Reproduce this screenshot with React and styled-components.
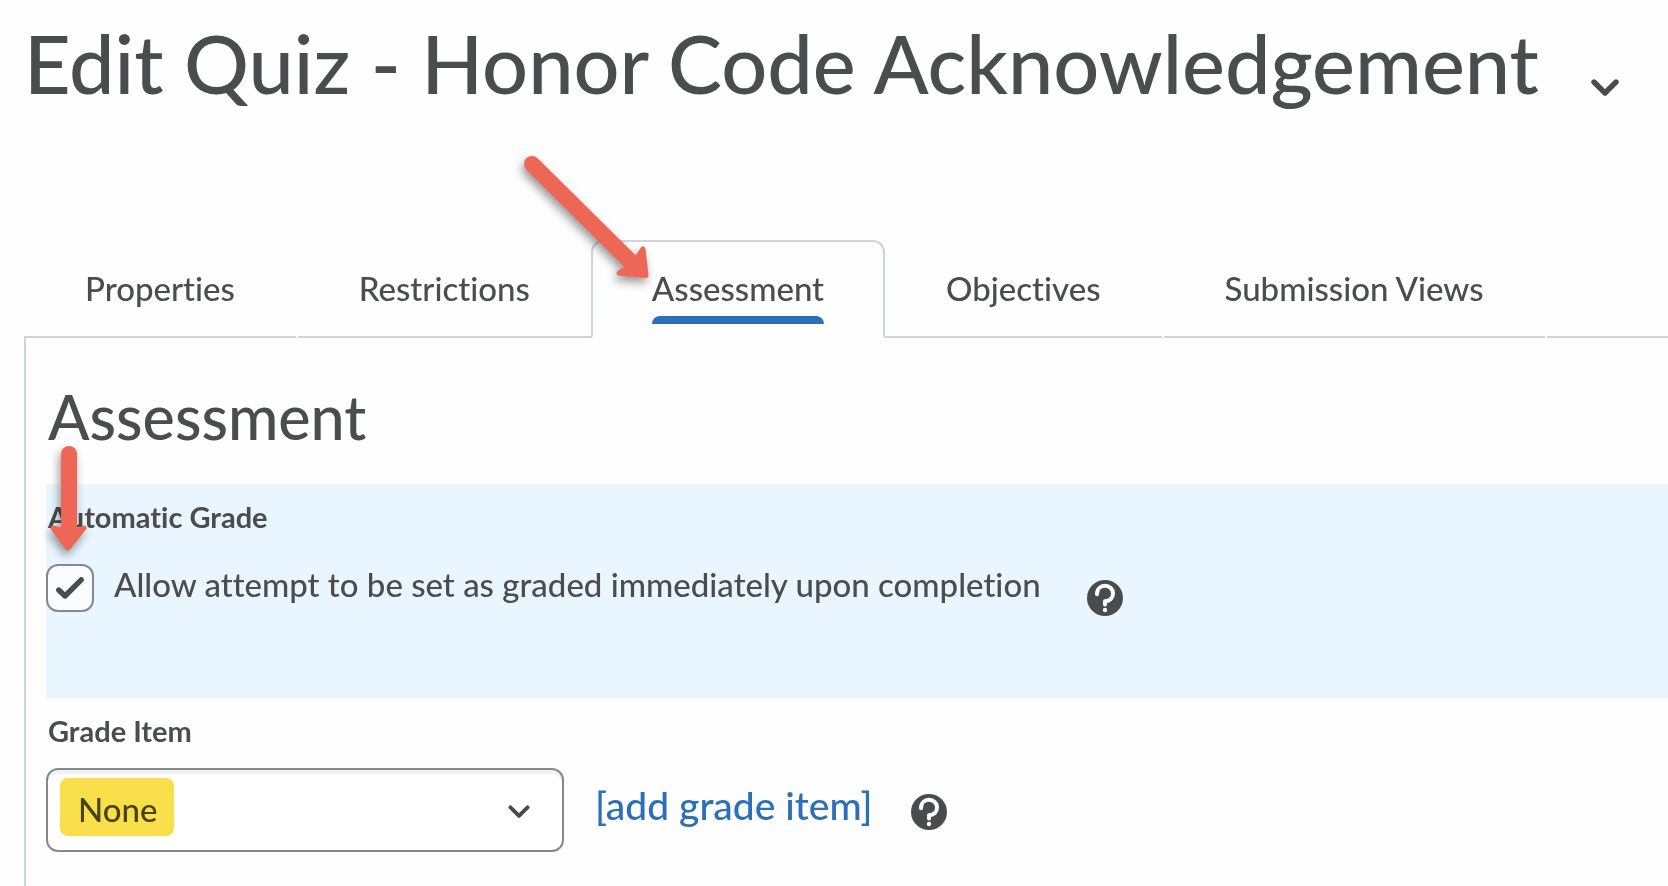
import { useState } from 'react';
import styled, { createGlobalStyle, css } from 'styled-components';

const GlobalStyle = createGlobalStyle`
  *, *::before, *::after {
    box-sizing: border-box;
  }

  body {
    margin: 0;
    background: #fefefe;
    color: #4a4c4e;
    font-family: Lato, 'Open Sans', sans-serif;
    font-size: 33px;
    font-weight: 500;
    font-variant-ligatures: none;
    line-height: 40px;
  }

  button, select, input {
    font: inherit;
    font-variant-ligatures: none;
    color: inherit;
  }
`;

const Page = styled.div`
  min-height: 100vh;
  display: flex;
  flex-direction: column;
  padding-left: 24px;
  overflow: hidden;
`;

const PageHeader = styled.header`
  display: flex;
  align-items: center;
  gap: 44px;
  height: 126px;
`;

const PageTitle = styled.h1`
  margin: 0;
  font-size: 81px;
  line-height: 96px;
  font-weight: 500;
  white-space: nowrap;
`;

const IconButton = styled.button`
  display: flex;
  flex: none;
  padding: 0;
  border: 0;
  background: none;
  cursor: pointer;
`;

const TitleMenuButton = styled(IconButton)`
  padding: 8px;
  margin-top: 50px;
`;

const TabList = styled.div`
  display: flex;
  align-items: flex-end;
  gap: 2px;
  margin-top: 114px;

  &::after {
    content: '';
    flex: 1;
    border-bottom: 2px solid #cdd5dc;
  }
`;

const Tab = styled.button`
  position: relative;
  height: 98px;
  padding: 22px 61px 0;
  border: 0;
  border-bottom: 2px solid #cdd5dc;
  background: none;
  white-space: nowrap;
  cursor: pointer;

  ${(props) =>
    props.$active &&
    css`
      margin: 0 -2px;
      padding: 20px 59px 0;
      border: 2px solid #cdd5dc;
      border-bottom-color: transparent;
      border-radius: 12px 12px 0 0;
    `}
`;

const TabLabel = styled.span`
  display: block;
  height: 62px;

  &::after {
    content: '';
    display: block;
    height: 8px;
    margin-top: 8px;
    border-radius: 8px 8px 0 0;
    background: ${(props) => (props.$active ? '#2b6fb9' : 'transparent')};
  }
`;

const Panel = styled.main`
  flex: 1;
  padding: 40px 0 32px 20px;
  border-left: 2px solid #cdd5dc;
`;

const SectionTitle = styled.h2`
  margin: 0;
  padding-left: 2px;
  font-size: 61px;
  line-height: 78px;
  font-weight: 500;
`;

const Field = styled.section`
  position: relative;
  padding-top: 16px;
`;

const HighlightedField = styled(Field)`
  height: 214px;
  margin-top: 28px;
  background: #e9f6ff;
`;

const FieldLabel = styled.label`
  display: block;
  padding-left: 2px;
  font-size: 29px;
  line-height: 34px;
  font-weight: 700;
`;

const FieldTitle = styled.h3`
  margin: 0;
  padding-left: 2px;
  font-size: 29px;
  line-height: 34px;
`;

const Row = styled.div`
  display: flex;
  align-items: center;
  margin-top: ${(props) => props.$mt};
`;

const CheckboxLabel = styled.label`
  display: flex;
  align-items: center;
  gap: 20px;
  cursor: pointer;
`;

const CheckboxText = styled.span`
  padding-bottom: 8px;
`;

const CheckboxBox = styled.span`
  display: grid;
  flex: none;
  width: 48px;
  height: 48px;

  & > * {
    grid-area: 1 / 1;
  }

  svg {
    place-self: center;
    pointer-events: none;
  }
`;

const Checkbox = styled.input`
  appearance: none;
  width: 48px;
  height: 48px;
  margin: 0;
  border: 2px solid #86898c;
  border-radius: 12px;
  background: #f9fbff;
  cursor: pointer;
`;

const HelpButton = styled(IconButton)`
  margin-top: ${(props) => props.$mt};
  margin-left: ${(props) => props.$ml};
`;

const SelectWrapper = styled.div`
  position: relative;
  display: grid;
  width: 518px;

  & > select,
  & > svg {
    grid-area: 1 / 1;
  }

  & > svg {
    place-self: center end;
    margin-top: 4px;
    margin-right: 34px;
    pointer-events: none;
  }
`;

const Select = styled.select`
  appearance: none;
  width: 100%;
  height: 84px;
  padding: 0 80px 2px 30px;
  border: 2px solid #86898c;
  border-radius: 12px;
  background: #ffffff;
  box-shadow: inset 0 4px 0 #f1f2f4;
  cursor: pointer;
`;

const Marker = styled.span`
  position: absolute;
  top: 10px;
  left: 14px;
  width: 114px;
  height: 58px;
  border-radius: 8px;
  background: #f9df4a;
  mix-blend-mode: multiply;
  pointer-events: none;
`;

const AddLink = styled.a`
  margin-left: 31px;
  padding-bottom: 10px;
  color: #2b6fb9;
  font-size: 39px;
  line-height: 48px;
  text-decoration: none;
`;

const Arrow = styled.svg`
  position: absolute;
  top: ${(props) => props.$top};
  left: ${(props) => props.$left};
  overflow: visible;
  pointer-events: none;
  z-index: 1;
  fill: #ee6655;
  stroke: #ee6655;
  stroke-linecap: round;
  stroke-linejoin: round;
  filter: drop-shadow(-2px 5px 5px rgba(0, 0, 0, 0.4));
`;

const tabs = ['Properties', 'Restrictions', 'Assessment', 'Objectives', 'Submission Views'];

function ChevronIcon({ width, height, stroke }) {
  return (
    <svg width={width} height={height} viewBox="0 0 28 18" fill="none" aria-hidden="true">
      <path
        d="M3 3 L14 14 L25 3"
        stroke="#494c4e"
        strokeWidth={stroke}
        strokeLinecap="round"
        strokeLinejoin="round"
      />
    </svg>
  );
}

function HelpIcon() {
  return (
    <svg width="36" height="36" viewBox="0 0 36 36" fill="none" aria-hidden="true">
      <circle cx="18" cy="18" r="18" fill="#494c4e" />
      <path
        d="M10 14.2 C10 9 13.5 5.8 18 5.8 C22.6 5.8 26 9.2 26 13.6 C26 18 22.8 20.9 18 21.3 V24.6"
        stroke="#fff"
        strokeWidth="4"
        strokeLinecap="round"
        strokeLinejoin="round"
      />
      <circle cx="18" cy="30" r="2.2" fill="#fff" />
    </svg>
  );
}

function CheckIcon() {
  return (
    <svg width="28" height="22" viewBox="0 0 28 22" fill="none" aria-hidden="true">
      <path
        d="M2.8 13 L9 19 L25.2 2.8"
        stroke="#494c4e"
        strokeWidth="5.4"
        strokeLinecap="round"
        strokeLinejoin="round"
      />
    </svg>
  );
}

export default function App() {
  const [activeTab, setActiveTab] = useState('Assessment');
  const [autoGrade, setAutoGrade] = useState(true);
  const [gradeItem, setGradeItem] = useState('none');

  return (
    <>
      <GlobalStyle />
      <Page>
        <PageHeader>
          <PageTitle>Edit Quiz - Honor Code Acknowledgement</PageTitle>
          <TitleMenuButton type="button" aria-label="Quiz actions">
            <ChevronIcon width="28" height="18" stroke="5.4" />
          </TitleMenuButton>
        </PageHeader>

        <TabList role="tablist">
          {tabs.map((tab) => (
            <Tab
              key={tab}
              type="button"
              role="tab"
              aria-selected={tab === activeTab}
              $active={tab === activeTab}
              onClick={() => setActiveTab(tab)}
            >
              <TabLabel $active={tab === activeTab}>{tab}</TabLabel>
              {tab === 'Assessment' && (
                <Arrow $top="-86px" $left="-70px" width="130" height="130" aria-hidden="true">
                  <path d="M9 8 L110 108" strokeWidth="16" />
                  <path
                    d="M120 93 L123 119.5 L96 117 L104 112 L114 102 Z"
                    strokeWidth="5"
                  />
                </Arrow>
              )}
            </Tab>
          ))}
        </TabList>

        <Panel>
          <SectionTitle>Assessment</SectionTitle>

          <HighlightedField>
            <FieldTitle>Automatic Grade</FieldTitle>
            <Row $mt="26px">
              <CheckboxLabel>
                <CheckboxBox>
                  <Checkbox
                    type="checkbox"
                    checked={autoGrade}
                    onChange={(e) => setAutoGrade(e.target.checked)}
                  />
                  {autoGrade && <CheckIcon />}
                </CheckboxBox>
                <CheckboxText>
                  Allow attempt to be set as graded immediately upon completion
                </CheckboxText>
              </CheckboxLabel>
              <HelpButton type="button" aria-label="Help with automatic grade" $mt="20px" $ml="46px">
                <HelpIcon />
              </HelpButton>
            </Row>
            <Arrow $top="-38px" $left="3px" width="40" height="108" aria-hidden="true">
              <path d="M20 8 V84" strokeWidth="16" />
              <path d="M4 82 L19 102 L35 82 L29 84 H12 Z" strokeWidth="5" />
            </Arrow>
          </HighlightedField>

          <Field>
            <FieldLabel htmlFor="grade-item">Grade Item</FieldLabel>
            <Row $mt="20px">
              <SelectWrapper>
                <Select
                  id="grade-item"
                  value={gradeItem}
                  onChange={(e) => setGradeItem(e.target.value)}
                >
                  <option value="none">None</option>
                </Select>
                <ChevronIcon width="22" height="14" stroke="5" />
                <Marker />
              </SelectWrapper>
              <AddLink href="#add-grade-item">[add grade item]</AddLink>
              <HelpButton type="button" aria-label="Help with grade item" $mt="4px" $ml="38px">
                <HelpIcon />
              </HelpButton>
            </Row>
          </Field>
        </Panel>
      </Page>
    </>
  );
}
